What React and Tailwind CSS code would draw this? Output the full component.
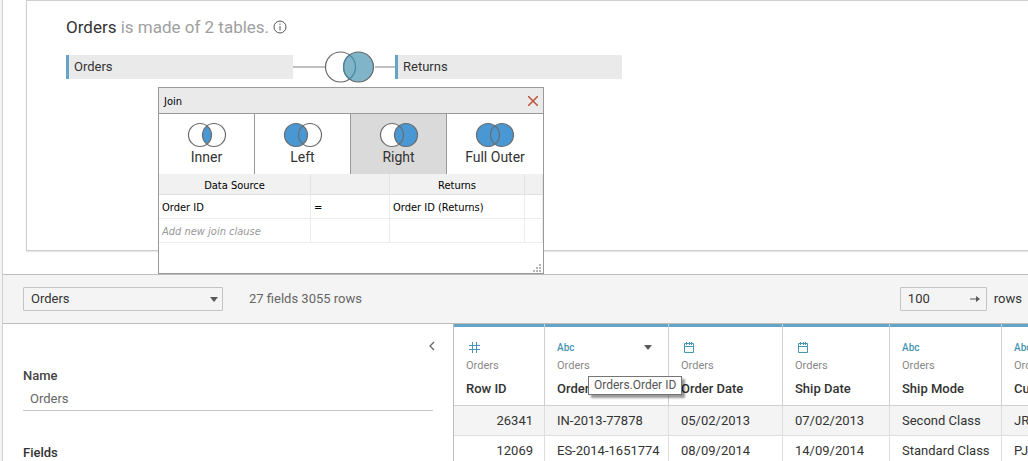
import React, { useState } from "react";

const joinTypes = [
  { id: "inner", label: "Inner" },
  { id: "left", label: "Left" },
  { id: "right", label: "Right" },
  { id: "full", label: "Full Outer" },
];

const columns = [
  { name: "Row ID", type: "number", width: 91 },
  { name: "Order ID", type: "text", width: 124, menu: true },
  { name: "Order Date", type: "date", width: 114 },
  { name: "Ship Date", type: "date", width: 107 },
  { name: "Ship Mode", type: "text", width: 112 },
  { name: "Customer ID", type: "text", width: 120 },
];

const tableWidth = columns.reduce((sum, c) => sum + c.width, 0);

const rows = [
  ["26341", "IN-2013-77878", "05/02/2013", "07/02/2013", "Second Class", "JR-16210"],
  ["12069", "ES-2014-1651774", "08/09/2014", "14/09/2014", "Standard Class", "PJ-18835"],
];

// two overlapping circles, filled according to the join type
const JoinIcon = ({ type }) => {
  const left = type === "left" || type === "full";
  const right = type === "right" || type === "full";
  return (
    <svg width="40" height="26" viewBox="0 0 40 26" fill="none" aria-hidden="true">
      <circle cx="13" cy="13" r="11.5" fill={left ? "#4a98d3" : "#fff"} />
      <circle cx="27" cy="13" r="11.5" fill={right ? "#4a98d3" : "#fff"} />
      {(type === "left" || type === "inner") && (
        <path d="M20 3.9a11.5 11.5 0 0 1 0 18.2a11.5 11.5 0 0 1 0-18.2z" fill="#4a98d3" />
      )}
      <circle cx="13" cy="13" r="11.5" stroke="#6b6b6b" strokeWidth="1.2" />
      <circle cx="27" cy="13" r="11.5" stroke="#6b6b6b" strokeWidth="1.2" />
    </svg>
  );
};

const TypeIcon = ({ type }) => {
  if (type === "number") {
    return (
      <svg className="ml-[3px]" width="11" height="11" viewBox="0 0 11 11" stroke="#4996b2" aria-hidden="true">
        <path d="M3.5 0v11M7.5 0v11M0 3.5h11M0 7.5h11" />
      </svg>
    );
  }
  if (type === "date") {
    return (
      <svg className="ml-[3px]" width="11" height="11" viewBox="0 0 11 11" fill="none" stroke="#4996b2" aria-hidden="true">
        <path d="M.5 1.5h9v9h-9zM.5 4.5h9M2.5 0v3M5.5 0v3M7.5 0v3" />
      </svg>
    );
  }
  return <span className="text-[10px] leading-3 font-medium text-[#4996b2]">Abc</span>;
};

const Caret = ({ className }) => (
  <svg className={className} width="8" height="5" viewBox="0 0 8 5" fill="#595959" aria-hidden="true">
    <path d="M0 0h8L4 5z" />
  </svg>
);

const JoinDialog = () => {
  const [joinType, setJoinType] = useState("right");

  return (
    <div
      role="dialog"
      aria-label="Join"
      className="absolute top-[87px] left-[155px] z-10 flex h-[187px] w-[386px] flex-col border border-[#999] bg-white font-['DejaVu_Sans_Condensed','Noto_Sans',sans-serif] text-[11px] text-black"
    >
      <div className="flex h-[26px] shrink-0 items-center justify-between border-b border-[#999] bg-[#eaeaea] px-[5px]">
        <span className="pt-[3px]">Join</span>
        <button type="button" aria-label="Close">
          <svg width="10" height="10" viewBox="0 0 10 10" stroke="#b9543a" strokeWidth="1.5" aria-hidden="true">
            <path d="M0 0l10 10M10 0L0 10" />
          </svg>
        </button>
      </div>

      <div className="grid h-[60px] shrink-0 grid-cols-4 font-['Roboto',sans-serif] text-sm text-[#333]">
        {joinTypes.map((j) => (
          <button
            key={j.id}
            type="button"
            aria-pressed={joinType === j.id}
            onClick={() => setJoinType(j.id)}
            className={`flex flex-col items-center border-r border-[#999] pt-2 leading-[18px] last:border-r-0 ${
              joinType === j.id ? "bg-[#dadada]" : "bg-white"
            }`}
          >
            <JoinIcon type={j.id} />
            {j.label}
          </button>
        ))}
      </div>

      <table className="w-full table-fixed border-separate border-spacing-0">
        <colgroup>
          <col className="w-[152px]" />
          <col className="w-[79px]" />
          <col className="w-[135px]" />
          <col />
        </colgroup>
        <thead>
          <tr className="bg-[#f1f1f1] [&>th]:h-[21px] [&>th]:border-r [&>th]:border-b [&>th]:border-[#e2e2e2] [&>th]:p-0 [&>th]:pt-[3px] [&>th]:leading-4 [&>th]:font-normal">
            <th>Data Source</th>
            <th></th>
            <th>Returns</th>
            <th></th>
          </tr>
        </thead>
        <tbody className="[&_td]:h-6 [&_td]:border-r [&_td]:border-b [&_td]:border-[#ececec] [&_td]:p-0 [&_td]:pt-[3px] [&_td]:pl-[3px] [&_td]:leading-4">
          <tr>
            <td>Order ID</td>
            <td>=</td>
            <td>Order ID (Returns)</td>
            <td></td>
          </tr>
          <tr>
            <td className="text-[#999] italic">Add new join clause</td>
            <td></td>
            <td></td>
            <td></td>
          </tr>
        </tbody>
      </table>

      <svg className="mt-auto mr-[2px] mb-px self-end" width="8" height="8" viewBox="0 0 8 8" fill="#b5b5b5" aria-hidden="true">
        <path d="M6 0h2v2H6zM3 3h2v2H3zM6 3h2v2H6zM0 6h2v2H0zM3 6h2v2H3zM6 6h2v2H6z" />
      </svg>
    </div>
  );
};

const JoinCanvas = () => (
  <section className="relative h-[274px] shrink-0 pl-[23px]">
    <div className="h-[251px] border border-r-0 border-[#cfcfcf] pt-4 pl-[39px] shadow-[0_1px_1px_#e6e6e6]">
      <h1 className="flex items-center gap-1 text-[17px] leading-5 text-[#a0a0a0]">
        <span>
          <span className="text-[#333]">Orders</span> is made of 2 tables.
        </span>
        <svg width="14" height="14" viewBox="0 0 14 14" fill="none" stroke="#555" aria-hidden="true">
          <circle cx="7" cy="7" r="6" />
          <path d="M7 6v4.5M7 3.5v1.3" />
        </svg>
      </h1>

      <div className="mt-[18px] flex items-center">
        <div className="h-6 w-[227px] border-l-3 border-[#64a4c5] bg-[#eaeaea] pl-[5px] leading-6">Orders</div>
        <div className="h-[2px] w-8 bg-[#bfbfbf]" />
        <svg className="-my-1" width="50" height="32" viewBox="0 0 50 32" fill="none" aria-hidden="true">
          <circle cx="15.5" cy="16" r="15" fill="#fff" stroke="#666" strokeWidth="1.2" />
          <circle cx="33.5" cy="16" r="15" fill="#7fb4c9" stroke="#666" strokeWidth="1.2" />
          <path d="M24.5 4a15 15 0 0 1 0 24M24.5 4a15 15 0 0 0 0 24" stroke="#4a86a0" strokeWidth="1.2" />
        </svg>
        <div className="h-[2px] w-5 bg-[#bfbfbf]" />
        <div className="h-6 w-[227px] border-l-3 border-[#64a4c5] bg-[#eaeaea] pl-[5px] leading-6">Returns</div>
      </div>
    </div>
    <JoinDialog />
  </section>
);

const Toolbar = () => {
  const [limit, setLimit] = useState("100");

  return (
    <div className="flex h-[50px] shrink-0 items-center border-y border-[#bdbdbd] bg-[#f4f4f4] pr-[6px] pl-5">
      <div className="relative w-[200px]">
        <select
          aria-label="Table"
          className="block h-6 w-full appearance-none rounded-[1px] border border-[#c4c4c4] pl-[7px] text-[#333]"
        >
          <option>Orders</option>
          <option>Returns</option>
        </select>
        <Caret className="pointer-events-none absolute top-[10px] right-[5px]" />
      </div>
      <span className="ml-[26px] text-[#666]">27 fields 3055 rows</span>
      <div className="ml-auto flex h-6 w-[87px] items-center rounded-[1px] border border-[#c4c4c4] pr-[6px] pl-[7px]">
        <input
          id="row-limit"
          value={limit}
          onChange={(e) => setLimit(e.target.value)}
          className="w-0 flex-1 bg-transparent outline-none"
        />
        <svg width="10" height="6" viewBox="0 0 10 6" fill="#595959" aria-hidden="true">
          <path d="M0 2.5h6V0l4 3-4 3V3.5H0z" />
        </svg>
      </div>
      <label htmlFor="row-limit" className="ml-[7px]">
        rows
      </label>
    </div>
  );
};

const Sidebar = () => {
  const [name, setName] = useState("Orders");

  return (
    <aside className="flex w-[451px] shrink-0 flex-col border-r border-[#bdbdbd] px-5 pt-[17px]">
      <button type="button" aria-label="Collapse" className="mr-[-2px] self-end">
        <svg width="6" height="10" viewBox="0 0 6 10" fill="none" stroke="#666" strokeWidth="1.3" aria-hidden="true">
          <path d="M5 1L1 5l4 4" />
        </svg>
      </button>
      <label htmlFor="table-name" className="mt-[17px] leading-4 font-medium text-[#444]">
        Name
      </label>
      <input
        id="table-name"
        value={name}
        onChange={(e) => setName(e.target.value)}
        className="mt-[3px] h-6 border-b border-[#c4c4c4] pl-[7px] text-[#666] outline-none"
      />
      <h2 className="mt-[34px] leading-4 font-medium">Fields</h2>
    </aside>
  );
};

const DataGrid = () => (
  <div className="relative min-w-0 flex-1 overflow-hidden">
    <table className="table-fixed border-separate border-spacing-0" style={{ width: tableWidth }}>
      <colgroup>
        {columns.map((c) => (
          <col key={c.name} style={{ width: c.width }} />
        ))}
      </colgroup>
      <thead>
        <tr>
          {columns.map((c) => (
            <th key={c.name} className="border-r border-b border-[#cfcfcf] p-0 text-left font-normal">
              <div className="h-[81px] border-t-3 border-[#64a4c5] px-3 pt-[14px] leading-4 whitespace-nowrap">
                <div className="flex h-[13px] items-center justify-between">
                  <TypeIcon type={c.type} />
                  {c.menu && <Caret className="mr-1" />}
                </div>
                <div className="mt-1 text-[11px] text-[#888]">Orders</div>
                <div className="mt-[7px] font-medium text-[#333]">{c.name}</div>
              </div>
            </th>
          ))}
        </tr>
      </thead>
      <tbody>
        {rows.map((row) => (
          <tr key={row[0]} className="odd:bg-[#f4f4f4]">
            {row.map((value, i) => (
              <td
                key={columns[i].name}
                className={`h-[30px] border-r border-b border-[#dedede] py-0 whitespace-nowrap ${
                  columns[i].type === "number" ? "pr-[11px] text-right" : "pl-3 text-left"
                }`}
              >
                {value}
              </td>
            ))}
          </tr>
        ))}
      </tbody>
    </table>
    <div
      role="tooltip"
      className="absolute top-[52px] left-[134px] border border-[#767676] bg-white px-[5px] text-xs leading-[17px] whitespace-nowrap text-[#555] shadow-[3px_3px_2px_rgba(0,0,0,0.4)]"
    >
      Orders.Order ID
    </div>
  </div>
);

export default function App() {
  return (
    <div className="flex h-screen overflow-hidden bg-white font-['Roboto',sans-serif] text-[13px] text-[#333]">
      <div className="w-[3px] shrink-0 border-r border-[#cfcfcf] bg-[#f4f4f4]" />
      <main className="flex min-w-0 flex-1 flex-col">
        <JoinCanvas />
        <Toolbar />
        <div className="flex min-h-0 flex-1">
          <Sidebar />
          <DataGrid />
        </div>
      </main>
    </div>
  );
}
